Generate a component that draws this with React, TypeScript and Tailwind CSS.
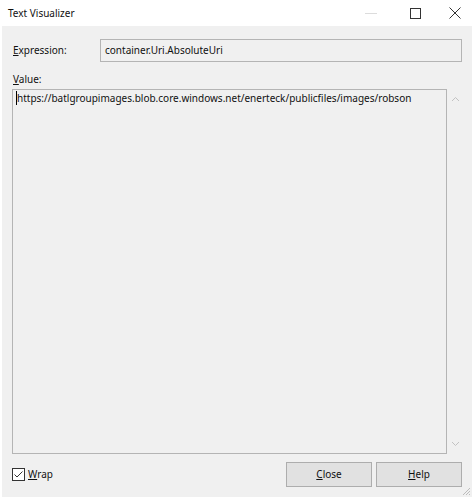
import React, { useState } from 'react';

const FONT = { fontFamily: '"Noto Sans", "Liberation Sans", sans-serif' };

const Chevron = ({ down }: { down?: boolean }) => (
  <svg width="9" height="6" viewBox="0 0 9 6" className="block">
    <path d={down ? 'M1 1 L4.5 4.5 L8 1' : 'M1 5 L4.5 1.5 L8 5'} fill="none" stroke="#c2c2c2" strokeWidth="1" />
  </svg>
);

export default function App() {
  const [wrap, setWrap] = useState(true);

  return (
    <div className="w-[474px] h-[500px] bg-white text-[10px] text-[#111] flex flex-col" style={FONT}>
      {/* title bar */}
      <div className="h-[26px] flex items-center shrink-0">
        <span className="pl-[8px] flex-1">Text Visualizer</span>
        <div className="w-[12px] h-px bg-[#dcdcdc]" />
        <div className="w-[11px] h-[11px] border border-[#333] ml-[33px]" />
        <svg width="12" height="12" viewBox="0 0 12 12" className="ml-[28px] mr-[13px]">
          <path d="M0.5 0.5 L11.5 11.5 M11.5 0.5 L0.5 11.5" stroke="#333" strokeWidth="1" />
        </svg>
      </div>

      {/* client area */}
      <div className="mx-[2px] h-[471px] bg-[#f0f0f0] flex flex-col relative">
        <div className="flex items-center mt-[13px] h-[23px]">
          <span className="pl-[11px] w-[98px]"><u>E</u>xpression:</span>
          <div className="w-[362px] h-[23px] border border-[#b4b4b4] flex items-center pl-[4px]">
            container.Uri.AbsoluteUri
          </div>
        </div>

        <div className="pl-[11px] mt-[9px] leading-[16px]"><u>V</u>alue:</div>

        <div className="flex mt-[2px] pl-[10px]">
          <div className="w-[435px] h-[365px] border border-[#b4b4b4] pl-[3px] pt-0 leading-[16px]">
            <span className="border-l border-black">https://batlgroupimages.blob.core.windows.net/enerteck/publicfiles/images/robson</span>
          </div>
          <div className="w-[16px] flex flex-col items-center justify-between py-[7px]">
            <Chevron />
            <Chevron down />
          </div>
        </div>

        <div className="flex items-center mt-[8px] h-[25px]">
          <label className="flex items-center pl-[10px] flex-1 cursor-default" onClick={() => setWrap(!wrap)}>
            <div className="w-[13px] h-[13px] border border-[#333] bg-white flex items-center justify-center">
              {wrap && (
                <svg width="9" height="7" viewBox="0 0 9 7">
                  <path d="M0.5 3.5 L3 6 L8.5 0.5" fill="none" stroke="#333" strokeWidth="1" />
                </svg>
              )}
            </div>
            <span className="pl-[3px]"><u>W</u>rap</span>
          </label>
          <button className="w-[86px] h-[25px] bg-[#e1e1e1] border border-[#adadad]"><u>C</u>lose</button>
          <button className="w-[86px] h-[25px] bg-[#e1e1e1] border border-[#adadad] ml-[4px] mr-[10px]"><u>H</u>elp</button>
        </div>

        <svg width="10" height="10" viewBox="0 0 10 10" className="absolute right-[1px] bottom-[1px]">
          <path d="M9 2 L2 9 M9 5 L5 9 M9 8 L8 9" stroke="#bcbcbc" strokeWidth="1" />
        </svg>
      </div>
    </div>
  );
}
